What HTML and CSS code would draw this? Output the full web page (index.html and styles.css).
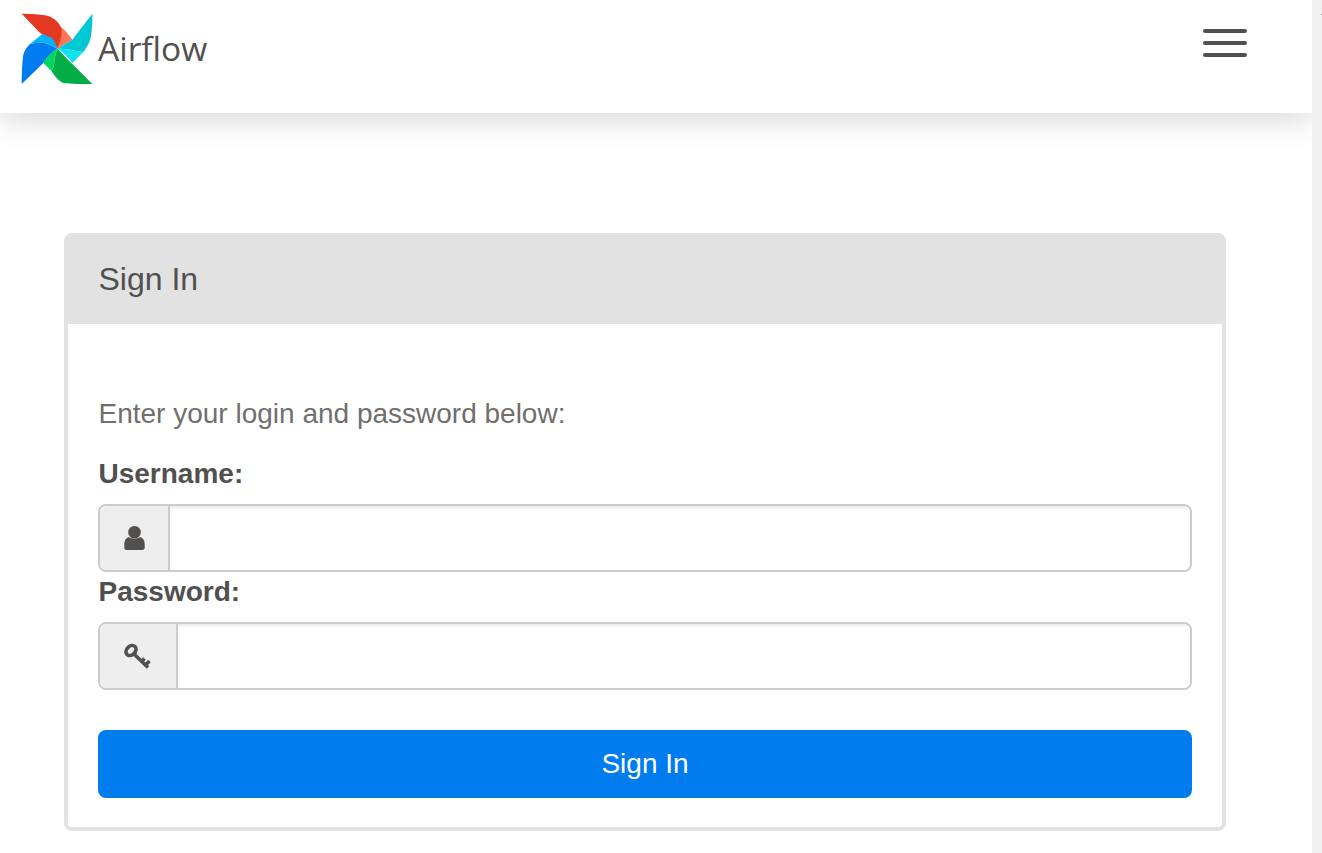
FILE: index.html
```html
<!DOCTYPE html>
<html lang="en">
<head>
<meta charset="utf-8">
<title>Airflow - Sign In</title>
<link rel="stylesheet" href="styles.css">
</head>
<body>
<div class="page">
  <main class="content">
    <header class="navbar">
      <a class="brand" href="#">
        <svg class="logo" viewBox="21 13 72 71" width="72" height="71" aria-hidden="true">
          <path fill="#ff7557" d="M60 26C65 30 69 35 72.300 39.700L57.300 48.700C60.500 41 62 33 60 26Z"/>
          <path fill="#e43921" d="M21.700 13.700C32 14 39 14.300 45 15.300C51 16.500 54 18.500 56.700 21.300C59 23.500 60.800 26.500 61.700 29.700C62 36 60 43 57.300 48.700C56.500 46.500 55.500 45.500 54 43C51 39.500 46 36 40 33Z"/>
          <path fill="#00c7d4" d="M92.300 13.700C92.500 22 92 30 91 36.300C90 42 87 47.500 83.300 52C78 51.500 74 50.500 70 49.700C65.500 49 61 48.800 57.300 48.700L72.300 39.700Z"/>
          <path fill="#11e1ee" d="M57.300 48.700C62 48.600 66 49 70 49.700C74 50.500 78 51.500 83.300 52L72.300 63C69 58 63 52 57.300 48.700Z"/>
          <path fill="#00ad46" d="M92.300 84C82 84 72 84 63 83C58 80.500 54.500 76 51.700 71.300C53.500 68 54.300 64.500 54.300 61.300C54.800 57 56 52.500 57.300 48.700C60 51 66 58 72.300 64Z"/>
          <path fill="#00d75f" d="M57.300 48.700C56 52.500 54.800 57 54.300 61.300C54.300 64.500 53.500 68 51.700 71.300L43.300 63C47 56.500 52 51.500 57.300 48.700Z"/>
          <path fill="#017cee" d="M21.700 84C21.700 74 22 63 23.300 54.700C24.500 50 27 47 30 44C35 43 40 42.500 45 43C49 44 53.500 46.500 57.300 48.700C52 51.500 47 56.500 43.300 63Z"/>
          <path fill="#00b1ff" d="M42.300 34C46 35.500 49.500 36.500 52 38C54.500 41 56.500 45.500 57.300 48.700C53.500 46.500 49 44 45 43C40 42.500 35 43 30 44Z"/>
        </svg>
        <span class="brand-name">Airflow</span>
      </a>
      <button class="menu" type="button" aria-label="Toggle navigation">
        <span class="menu-bar"></span>
        <span class="menu-bar"></span>
        <span class="menu-bar"></span>
      </button>
    </header>
    <section class="panel">
      <h1 class="panel-heading">Sign In</h1>
      <form class="panel-body">
        <p class="intro">Enter your login and password below:</p>
        <label class="field-label" for="username">Username:</label>
        <div class="input-group">
          <span class="addon addon-user">
            <svg class="icon" viewBox="0 0 21 24" width="21" height="24" aria-hidden="true">
              <circle cx="10.500" cy="6.300" r="6.300"/>
              <path d="M2.500 24C1 24 0.300 23 0.300 21.500V18C0.300 14.500 2 12 4.800 11C6.300 12 8.200 12.700 10.500 12.700C12.800 12.700 14.700 12 16.200 11C19 12 20.700 14.500 20.700 18V21.500C20.700 23 20 24 18.500 24Z"/>
            </svg>
          </span>
          <input class="input" id="username" type="text">
        </div>
        <label class="field-label" for="password">Password:</label>
        <div class="input-group">
          <span class="addon addon-key">
            <svg class="icon" viewBox="0 0 27 26" width="27" height="26" aria-hidden="true">
              <ellipse class="key-line" cx="7" cy="7.500" rx="5.600" ry="4.300" transform="rotate(-45 7 7.500)"/>
              <path class="key-line" d="M10.500 11.500L24 24.500M17.500 18.500L20.500 15.500M21.500 22L25.500 18"/>
            </svg>
          </span>
          <input class="input" id="password" type="password">
        </div>
        <button class="submit" type="button">Sign In</button>
      </form>
    </section>
  </main>
  <aside class="scrollbar"><span class="scroll-tick"></span></aside>
</div>
</body>
</html>
```
FILE: styles.css
```css
html, body {
  margin: 0;
  height: 100%;
  overflow: hidden;
  background: #fff;
}

body {
  font-family: "Liberation Sans", Arial, sans-serif;
  color: #51504f;
}

.page {
  display: flex;
  height: 853px;
}

.content {
  flex: 1;
  min-width: 0;
  overflow: hidden;
}

.scrollbar {
  width: 10px;
  background: #f1f1f1;
  display: flex;
  justify-content: flex-end;
  padding-top: 14px;
  box-sizing: border-box;
}

.scroll-tick {
  width: 1px;
  height: 1px;
  background: #777;
}

.navbar {
  display: flex;
  justify-content: space-between;
  align-items: flex-start;
  height: 113px;
  box-sizing: border-box;
  padding: 13px 65px 0 21px;
  background: #fff;
  box-shadow: 0 6px 30px rgba(0, 0, 0, 0.16);
}

.brand {
  display: flex;
  align-items: center;
  gap: 5px;
  text-decoration: none;
  color: #51504f;
}

.logo {
  display: block;
}

.brand-name {
  font-family: "Open Sans", sans-serif;
  font-size: 33.500px;
  line-height: 71px;
}

.menu {
  display: flex;
  flex-direction: column;
  gap: 8px;
  width: 44px;
  padding: 16px 0 0;
  border: 0;
  background: none;
}

.menu-bar {
  display: block;
  height: 4px;
  border-radius: 2px;
  background: #51504f;
}

.panel {
  width: 1162px;
  height: 598px;
  box-sizing: border-box;
  margin: 120px 0 0 64px;
  border: 4px solid #e2e2e2;
  border-radius: 8px;
}

.panel-heading {
  margin: 0;
  height: 87px;
  box-sizing: border-box;
  padding: 24px 0 0 30.500px;
  background: #e2e2e2;
  font-size: 32px;
  font-weight: 400;
  line-height: 36px;
}

.panel-body {
  padding: 70px 30px 0;
}

.intro {
  margin: 0 0 20px;
  font-size: 28px;
  line-height: 40px;
  color: #706f6e;
  padding-left: 0.500px;
}

.field-label {
  display: block;
  margin: 0 0 10px;
  padding-left: 0.500px;
  font-size: 28px;
  font-weight: 700;
  line-height: 40px;
}

.input-group {
  display: flex;
  height: 68px;
  box-sizing: border-box;
  border: 2px solid #ccc;
  border-radius: 8px;
  overflow: hidden;
}

.addon {
  display: flex;
  align-items: center;
  justify-content: center;
  box-sizing: border-box;
  background: #eee;
  border-right: 2px solid #ccc;
}

.addon-user {
  width: 70px;
  padding-left: 1px;
}

.addon-key {
  width: 78px;
  padding-right: 1px;
}

.icon {
  display: block;
  fill: #51504f;
}

.key-line {
  fill: none;
  stroke: #51504f;
  stroke-width: 3.600;
}

.input {
  flex: 1;
  min-width: 0;
  border: 0;
  outline: 0;
  padding: 0;
  background: #fff;
  box-shadow: inset 0 2px 2px rgba(0, 0, 0, 0.075);
}

.submit {
  display: block;
  width: 100%;
  height: 68px;
  margin-top: 40px;
  border: 0;
  border-radius: 8px;
  background: #017cee;
  color: #fff;
  font-family: inherit;
  font-size: 28px;
}
```
